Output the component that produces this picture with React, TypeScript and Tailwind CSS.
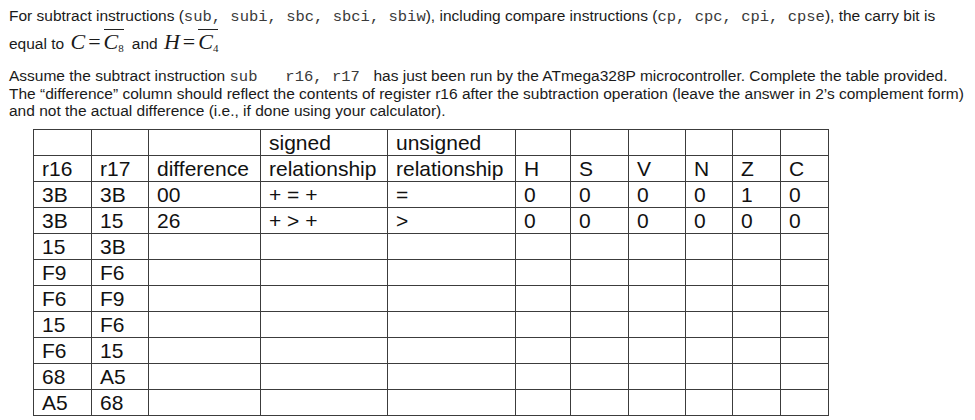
import React from "react";

const mono = "font-['Liberation_Mono',monospace] text-[#3a3a3a] leading-none";
const serif = "font-['Liberation_Serif',serif] italic text-[22px] leading-none";

const colWidths = [58, 57, 112, 127, 128, 55, 58, 57, 47, 48, 48];

const rows: string[][] = [
  ["", "", "", "signed", "unsigned", "", "", "", "", "", ""],
  ["r16", "r17", "difference", "relationship", "relationship", "H", "S", "V", "N", "Z", "C"],
  ["3B", "3B", "00", "+ = +", "=", "0", "0", "0", "0", "1", "0"],
  ["3B", "15", "26", "+ > +", ">", "0", "0", "0", "0", "0", "0"],
  ["15", "3B"],
  ["F9", "F6"],
  ["F6", "F9"],
  ["15", "F6"],
  ["F6", "15"],
  ["68", "A5"],
  ["A5", "68"],
];

// complemented carry term, e.g. C with a bar over C and its subscript
function BarC({ sub }: { sub: string }) {
  return (
    <span className="inline-block border-t border-[#222] leading-none pt-[1px]">
      <span className={serif}>C</span>
      <sub className="font-['Liberation_Serif',serif] not-italic text-[11px] leading-none">{sub}</sub>
    </span>
  );
}

export default function App() {
  return (
    <div className="w-[975px] h-[420px] bg-white overflow-hidden font-['Liberation_Sans',Arial,sans-serif] text-[15.5px] text-[#1a1a1a] pt-[7px]">
      {/* intro */}
      <div className="pl-[9px] whitespace-nowrap">
        <div className="leading-[18px] h-[18px]">
          For subtract instructions (<span className={mono}>sub, subi, sbc, sbci, sbiw</span>), including
          compare instructions (<span className={mono}>cp, cpc, cpi, cpse</span>), the carry bit is
        </div>
        <div className="leading-[25px] mt-[4px] h-[25px]">
          equal to <span className={serif + " ml-[2px]"}>C</span>
          <span className="font-['Liberation_Serif',serif] text-[22px] leading-none mx-[3px]">=</span>
          <BarC sub="8" />
          <span className="ml-[8px]">and</span> <span className={serif + " ml-[2px]"}>H</span>
          <span className="font-['Liberation_Serif',serif] text-[22px] leading-none mx-[3px]">=</span>
          <BarC sub="4" />
        </div>
      </div>

      {/* task */}
      <div className="pl-[9px] mt-[13px] leading-[17.5px] whitespace-nowrap">
        <div className="h-[17.5px]">
          Assume the subtract instruction{" "}
          <span className={mono + " whitespace-pre"}>sub   r16, r17 </span> has just been run by the ATmega328P
          microcontroller. Complete the table provided.
        </div>
        <div className="h-[17.5px]">
          The “difference” column should reflect the contents of register r16 after the subtraction operation (leave
          the answer in 2’s complement form)
        </div>
        <div className="h-[17.5px]">and not the actual difference (i.e., if done using your calculator).</div>
      </div>

      {/* flags table */}
      <table className="ml-[33px] mt-[9px] table-fixed border-collapse w-[795px] text-[21px] text-[#111]">
        <colgroup>
          {colWidths.map((w, i) => (
            <col key={i} style={{ width: w }} />
          ))}
        </colgroup>
        <tbody>
          {rows.map((r, ri) => (
            <tr key={ri} className="h-[26px]">
              {colWidths.map((_, ci) => (
                <td
                  key={ci}
                  className="border border-[#3c3c3c] px-[8px] py-0 leading-[24px] align-bottom whitespace-nowrap"
                >
                  {r[ci] ?? ""}
                </td>
              ))}
            </tr>
          ))}
        </tbody>
      </table>
    </div>
  );
}
